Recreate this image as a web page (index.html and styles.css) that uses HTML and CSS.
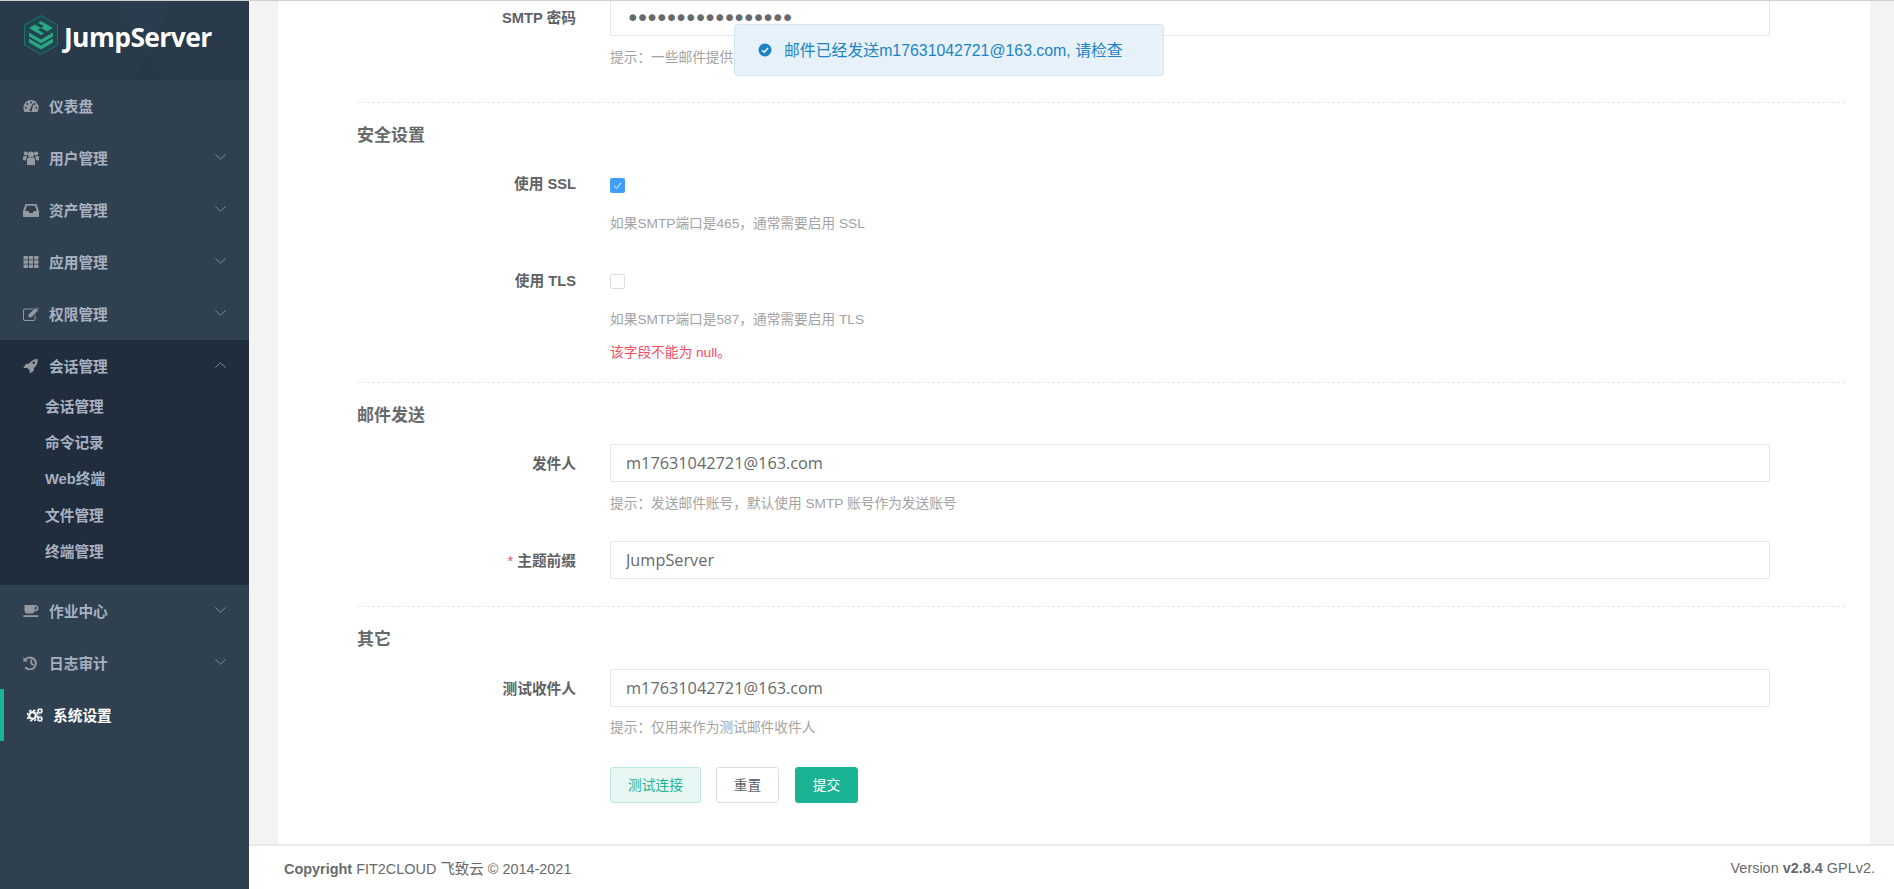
FILE: index.html
```html
<!DOCTYPE html>
<html lang="zh-CN">
<head>
<meta charset="utf-8">
<title>JumpServer</title>
<link rel="stylesheet" href="styles.css">
</head>
<body>
<div class="app">
  <aside class="sidebar">
    <div class="brand">
      <svg class="logo" viewBox="0 0 34 40" width="34" height="40">
        <path d="M17 .6 33.4 10v20L17 39.4.6 30V10z" fill="#20454f" stroke="#1c7a72" stroke-width="1"/>
        <path d="M5 23.5 17 30.5 29 23.5V27.5L17 34.5 5 27.5z" fill="#2aa681"/>
        <path d="M5 17.5 11 21 17 24.5 29 17.5V21.5L17 28.5 5 21.5z" fill="#2aa681"/>
        <path d="M17 6 29 13 23 16.5 17 13 14 14.8 20 18.3 17 20 5 13 11 9.5 17 13 20 11.2 14 7.7z" fill="#2aa681"/>
      </svg>
      <span class="brand-name">JumpServer</span>
    </div>
    <nav class="menu">
      <a class="item">
        <svg class="ico" viewBox="0 0 16 14"><path d="M8 1A7.6 7.6 0 0 0 .4 8.600c0 1.600.4 3 1.100 4.400h13c.7-1.400 1.100-2.800 1.100-4.400A7.600 7.600 0 0 0 8 1z"/><g fill="#2f4050"><circle cx="8" cy="3.400" r="1"/><circle cx="4.300" cy="5" r="1"/><circle cx="11.700" cy="5" r="1"/><circle cx="2.800" cy="8.800" r="1"/><circle cx="13.200" cy="8.800" r="1"/><path d="M7.200 10 9.600 4.600l.9.300-1.600 5.600a1.300 1.300 0 1 1-1.700-.5z"/></g></svg>
        <span class="label">仪表盘</span>
      </a>
      <a class="item">
        <svg class="ico" viewBox="0 0 16 14"><circle cx="2.900" cy="2.500" r="2.100"/><circle cx="13.100" cy="2.500" r="2.100"/><circle cx="8" cy="3.400" r="3"/><path d="M0 9.300V6.400C.2 5.200 1 4.800 2 5c.6.400 1.300.5 2.200.4-.7.900-1.100 2.200-1.100 3.900H0zM16 9.300V6.400c-.2-1.200-1-1.600-2-1.400-.6.400-1.300.5-2.200.4.700.9 1.100 2.200 1.100 3.900H16z"/><path d="M4 14V9.300c0-1.800.8-3 2.200-3.100 1 .8 2.600.8 3.600 0 1.400.1 2.200 1.300 2.200 3.100V14z"/></svg>
        <span class="label">用户管理</span>
        <svg class="chev" viewBox="0 0 11 6"><path d="M.4.4 5.500 5.200 10.600.4"/></svg>
      </a>
      <a class="item">
        <svg class="ico" viewBox="0 0 16 14"><path fill-rule="evenodd" d="M2.800 1h10.400l.4.300L16 8v5.500l-.5.500H.5l-.5-.5V8l2.400-6.700zM4 2.800 2.200 8h3.200l1 2h3.200l1-2h3.200L12 2.800z"/></svg>
        <span class="label">资产管理</span>
        <svg class="chev" viewBox="0 0 11 6"><path d="M.4.4 5.500 5.200 10.600.4"/></svg>
      </a>
      <a class="item">
        <svg class="ico" viewBox="0 0 16 14"><path d="M.5 1h4.400v3.500H.5zM5.800 1h4.400v3.500H5.800zM11.100 1h4.400v3.500h-4.400zM.5 5.300h4.400v3.500H.5zM5.800 5.300h4.400v3.500H5.800zM11.100 5.300h4.400v3.500h-4.400zM.5 9.600h4.400v3.400H.5zM5.800 9.600h4.400v3.400H5.800zM11.100 9.600h4.400v3.400h-4.400z"/></svg>
        <span class="label">应用管理</span>
        <svg class="chev" viewBox="0 0 11 6"><path d="M.4.4 5.500 5.200 10.600.4"/></svg>
      </a>
      <a class="item">
        <svg class="ico" viewBox="0 0 16 14"><path fill-rule="evenodd" d="M2 1.500h8.500L9.500 2.500H2A1 1 0 0 0 1 3.500v8.500a1 1 0 0 0 1 1h8.500a1 1 0 0 0 1-1V9l1-1v4a2 2 0 0 1-2 2H2a2 2 0 0 1-2-2V3.500a2 2 0 0 1 2-2z"/><path d="M5.500 7.500 12.300 1l2.700 2.500L8.500 10.300h-3zM13.300.4l.6-.4 2.100 2.100-.4.700z"/></svg>
        <span class="label">权限管理</span>
        <svg class="chev" viewBox="0 0 11 6"><path d="M.4.4 5.500 5.200 10.600.4"/></svg>
      </a>
      <div class="group">
        <a class="item">
          <svg class="ico" viewBox="0 0 16 14"><path fill-rule="evenodd" d="M14.800 0c.2 4-1 6.800-3.800 9l-.3 3.100L6.800 14.500l-.2-3.200-2.400-2.400-3.900.1L2.800 4.900l3.200-.3C8.200 1.800 10.900.1 14.800 0zM10.800 2.400a1.300 1.300 0 1 0 .01 0z"/></svg>
          <span class="label">会话管理</span>
          <svg class="chev" viewBox="0 0 11 6"><path d="M.4 5.600 5.500.8 10.600 5.600"/></svg>
        </a>
        <ul class="submenu">
          <li class="subitem">会话管理</li>
          <li class="subitem">命令记录</li>
          <li class="subitem">Web终端</li>
          <li class="subitem">文件管理</li>
          <li class="subitem">终端管理</li>
        </ul>
      </div>
      <a class="item">
        <svg class="ico" viewBox="0 0 16 14"><path fill-rule="evenodd" d="M1.500 1h10.300c2.400 0 3.700 1.300 3.700 3.200s-1.300 3.100-3.700 3.100h-.3c-.3 1.300-1.200 2.300-2.700 2.300H4.300c-1.600 0-2.800-1.200-2.800-2.800zM11.600 2.700v2.900c1.500.1 2.300-.5 2.300-1.500s-.8-1.500-2.300-1.400z"/><path d="M.3 11.200h15v1.800H.3z"/></svg>
        <span class="label">作业中心</span>
        <svg class="chev" viewBox="0 0 11 6"><path d="M.4.4 5.500 5.200 10.600.4"/></svg>
      </a>
      <a class="item">
        <svg class="ico" viewBox="0 0 16 14"><path d="M.4 1v4.600H5L3.300 3.900A5 5 0 1 1 3 10.600l-1.500 1.300A7 7 0 1 0 1.900 2.500z"/><path d="M7.400 3.500h1.800v3.700l2.200 1.600-1 1.300-3-2.200z"/></svg>
        <span class="label">日志审计</span>
        <svg class="chev" viewBox="0 0 11 6"><path d="M.4.4 5.500 5.200 10.600.4"/></svg>
      </a>
      <a class="item item-current">
        <svg class="ico" viewBox="0 0 16 14"><circle cx="5.500" cy="7.500" r="3.300" fill="none" stroke="#fff" stroke-width="2.200"/><circle cx="5.500" cy="7.500" r="5.300" fill="none" stroke="#fff" stroke-width="1.600" stroke-dasharray="2.300 1.860"/><circle cx="13" cy="3" r="1.700" fill="none" stroke="#fff" stroke-width="1.300"/><circle cx="13" cy="3" r="2.900" fill="none" stroke="#fff" stroke-width="1" stroke-dasharray="1.300 1"/><circle cx="13" cy="11" r="1.700" fill="none" stroke="#fff" stroke-width="1.300"/><circle cx="13" cy="11" r="2.900" fill="none" stroke="#fff" stroke-width="1" stroke-dasharray="1.300 1"/></svg>
        <span class="label">系统设置</span>
      </a>
    </nav>
  </aside>

  <div class="main">
    <div class="scroller">
      <form class="panel">
        <div class="form-body">
          <section class="section-first">
            <div class="field">
              <label class="flabel flabel-input">SMTP 密码</label>
              <div class="fcontrol">
                <input class="input input-pass" type="password" value="aaaaaaaaaaaaaaaaa">
                <p class="hint hint-11 hint-clipped">提示：一些邮件提供</p>
              </div>
            </div>
          </section>

          <section class="section sec-35">
            <h3 class="title">安全设置</h3>
            <div class="field mt-22">
              <label class="flabel flabel-check">使用 SSL</label>
              <div class="fcontrol">
                <span class="check check-on"><svg viewBox="0 0 15 15" width="15" height="15"><path d="M4 7.800 6.600 10.300 11 5" fill="none" stroke="#fff" stroke-width="1"/></svg></span>
                <p class="hint hint-20">如果SMTP端口是465，通常需要启用 SSL</p>
              </div>
            </div>
            <div class="field mt-35">
              <label class="flabel flabel-check">使用 TLS</label>
              <div class="fcontrol">
                <span class="check check-tls"></span>
                <p class="hint hint-20">如果SMTP端口是587，通常需要启用 TLS</p>
                <p class="error">该字段不能为 null。</p>
              </div>
            </div>
          </section>

          <section class="section sec-20">
            <h3 class="title">邮件发送</h3>
            <div class="field mt-15">
              <label class="flabel flabel-input">发件人</label>
              <div class="fcontrol">
                <input class="input" type="text" value="m17631042721@163.com">
                <p class="hint hint-11">提示：发送邮件账号，默认使用 SMTP 账号作为发送账号</p>
              </div>
            </div>
            <div class="field mt-28">
              <label class="flabel flabel-input"><span class="req">*</span> 主题前缀</label>
              <div class="fcontrol">
                <input class="input" type="text" value="JumpServer">
              </div>
            </div>
          </section>

          <section class="section sec-27">
            <h3 class="title">其它</h3>
            <div class="field mt-16">
              <label class="flabel flabel-input">测试收件人</label>
              <div class="fcontrol">
                <input class="input" type="text" value="m17631042721@163.com">
                <p class="hint hint-10">提示：仅用来作为测试邮件收件人</p>
              </div>
            </div>
            <div class="field mt-30">
              <span></span>
              <div class="actions">
                <button type="button" class="btn btn-test">测试连接</button>
                <button type="button" class="btn btn-reset">重置</button>
                <button type="button" class="btn btn-submit">提交</button>
              </div>
            </div>
          </section>
        </div>
      </form>
    </div>
    <footer class="footer">
      <div><strong>Copyright</strong> FIT2CLOUD 飞致云 © 2014-2021</div>
      <div>Version <strong>v2.8.4</strong> GPLv2.</div>
    </footer>
  </div>

  <div class="toast">
    <svg class="toast-ico" viewBox="0 0 14 14" width="14" height="14"><circle cx="7" cy="7" r="6.500" fill="#1c84c6"/><path d="M4 7.200 6.200 9.300 10 5" fill="none" stroke="#fff" stroke-width="1.300"/></svg>
    <span class="toast-text">邮件已经发送m17631042721@163.com, 请检查</span>
  </div>
</div>
</body>
</html>
```

FILE: styles.css
```css
* { box-sizing: border-box; }
html, body { margin: 0; height: 100%; overflow: hidden; }
body {
  font-family: "Liberation Sans", "Noto Sans CJK SC", sans-serif;
  color: #676a6c;
  background: #f3f3f4;
}
.app {
  position: relative;
  display: flex;
  height: 889px;
  border-top: 1px solid #cfcfcf;
}

/* sidebar */
.sidebar {
  width: 249px;
  flex: none;
  background: #2f4050;
}
.brand {
  height: 79px;
  display: flex;
  align-items: flex-start;
  padding: 14px 0 0 24px;
  background:
    linear-gradient(115deg, transparent 0 60%, rgba(20,30,42,.08) 60% 100%),
    linear-gradient(60deg, #293a4b 0 55%, #2a3c4d 55% 100%);
}
.logo { flex: none; }
.brand-name {
  margin: 3px 0 0 6px;
  font-family: "Open Sans", "Liberation Sans", sans-serif;
  font-weight: 700;
  font-size: 26.5px;
  line-height: 38px;
  letter-spacing: -.65px;
  color: #fff;
}
.menu { display: flex; flex-direction: column; }
.item {
  height: 52px;
  display: flex;
  align-items: center;
  padding: 0 23px;
  font-size: 14.7px;
  font-weight: 700;
  color: #a7b1c2;
}
.ico {
  width: 16px;
  height: 14px;
  flex: none;
  fill: #94989f;
  margin-right: 10px;
}
.label { flex: 1; padding-bottom: 2px; }
.chev {
  width: 11px;
  height: 6px;
  flex: none;
  margin-left: auto;
  fill: none;
  stroke: #7f8a98;
  stroke-width: 1;
  margin-bottom: 2px;
}
.group {
  background: #1f2d3d;
  height: 245px;
}
.submenu {
  list-style: none;
  margin: -3px 0 0;
  padding: 0;
}
.subitem {
  height: 36.2px;
  line-height: 36px;
  padding-left: 45px;
  font-size: 14.7px;
  font-weight: 700;
  color: #a7b1c2;
}
.item-current {
  border-left: 4px solid #1ab394;
  color: #fff;
}

/* main */
.main {
  flex: 1;
  min-width: 0;
  display: flex;
  flex-direction: column;
}
.scroller {
  flex: 1;
  min-height: 0;
  padding: 0 24px 0 29px;
  overflow: hidden;
}
.panel {
  display: block;
  height: 100%;
  background: #fff;
  overflow: hidden;
}
.form-body {
  margin-top: -3px;
  padding: 0 25px 0 79px;
}
.section { border-top: 1px dashed #e7eaec; }
.sec-35 { margin-top: 35px; }
.sec-20 { margin-top: 20px; }
.sec-27 { margin-top: 27px; }
.title {
  margin: 20px 0 0;
  font-size: 17px;
  line-height: 26px;
  font-weight: 700;
  color: #676a6c;
}
.field {
  display: grid;
  grid-template-columns: 219px 1160px;
  column-gap: 34px;
}
.mt-15 { margin-top: 15px; }
.mt-16 { margin-top: 16px; }
.mt-22 { margin-top: 22px; }
.mt-28 { margin-top: 28px; }
.mt-30 { margin-top: 30px; }
.mt-35 { margin-top: 35px; }
.flabel {
  text-align: right;
  font-size: 14.7px;
  font-weight: 700;
  color: #5f6265;
}
.flabel-input { line-height: 40px; height: 38px; }
.flabel-check { line-height: 26px; height: 24px; }
.req { color: #ed5565; font-weight: 400; }
.fcontrol { min-width: 0; }
.input {
  display: block;
  width: 100%;
  height: 38px;
  padding: 0 15px;
  border: 1px solid #e5e6e7;
  border-radius: 2px;
  background: #fff;
  font-family: "Open Sans", sans-serif;
  font-size: 16.3px;
  color: #676a6c;
  outline: none;
}
.input-pass {
  padding-top: 2px;
  font-family: "DejaVu Sans", sans-serif;
  font-size: 23px;
  letter-spacing: -3.9px;
}
.hint {
  margin: 0;
  height: 20px;
  font-size: 13.7px;
  line-height: 22px;
  color: #a3a3a3;
}
.hint-10 { margin-top: 10px; }
.hint-11 { margin-top: 11px; }
.hint-20 { margin-top: 20px; }
.error {
  margin: 13px 0 0;
  height: 20px;
  font-size: 13.7px;
  line-height: 22px;
  color: #fa4a5e;
}
.check {
  display: block;
  width: 15px;
  height: 15px;
  margin-top: 7px;
  border: 1px solid #dcdfe6;
  border-radius: 2px;
  background: #fff;
}
.check-tls { margin-top: 6px; }
.check-on {
  border: none;
  background: #409eff;
}
.check svg { display: block; }
.actions {
  display: flex;
  gap: 15px;
}
.btn {
  height: 36px;
  padding: 0 0 2px;
  border: 1px solid #dcdfe6;
  border-radius: 3px;
  font-family: inherit;
  font-size: 13.7px;
  background: #fff;
  color: #606266;
}
.btn-test {
  width: 91px;
  background: #e8f7f4;
  border-color: #bae8df;
  color: #1ab394;
}
.btn-reset { width: 63px; margin-right: 1px; }
.btn-submit {
  width: 63px;
  background: #1ab394;
  border-color: #1ab394;
  color: #fff;
}

/* footer */
.footer {
  height: 45px;
  flex: none;
  display: flex;
  justify-content: space-between;
  align-items: center;
  padding: 0 19px 0 35px;
  border-top: 2px solid #e7eaec;
  background: #fff;
  font-size: 14.45px;
  color: #676a6c;
}

/* toast */
.toast {
  position: absolute;
  left: 734px;
  top: 23px;
  width: 430px;
  height: 52px;
  display: flex;
  align-items: center;
  gap: 12px;
  padding-left: 23px;
  background: #e6f1f9;
  border: 1px solid #d2e6f4;
  border-radius: 4px;
  font-size: 15.87px;
  color: #1c84c6;
}
.toast-ico { flex: none; }
.toast-text { padding-bottom: 2px; }
```
